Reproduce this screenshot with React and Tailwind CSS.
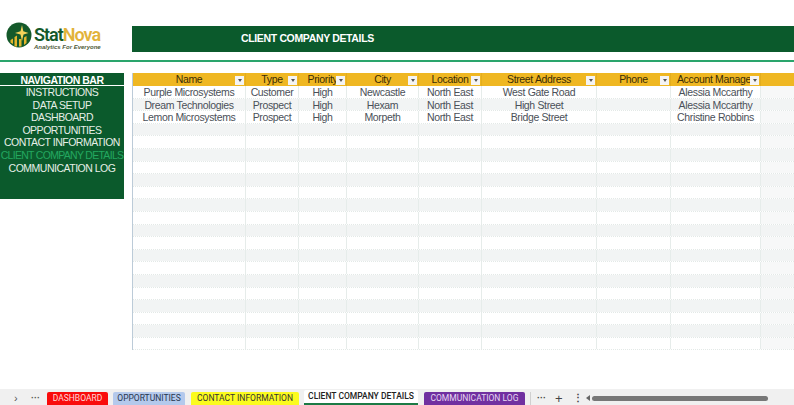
const columns = [
  { name: 'Name', width: 'w-[113px]' },
  { name: 'Type', width: 'w-[53px]' },
  { name: 'Priority', width: 'w-[48px]' },
  { name: 'City', width: 'w-[72px]' },
  { name: 'Location', width: 'w-[63px]' },
  { name: 'Street Address', width: 'w-[115px]' },
  { name: 'Phone', width: 'w-[74px]' },
  { name: 'Account Manager', width: 'w-[90px]' },
]

const clients = [
  ['Purple Microsystems', 'Customer', 'High', 'Newcastle', 'North East', 'West Gate Road', '', 'Alessia Mccarthy'],
  ['Dream Technologies', 'Prospect', 'High', 'Hexam', 'North East', 'High Street', '', 'Alessia Mccarthy'],
  ['Lemon Microsystems', 'Prospect', 'High', 'Morpeth', 'North East', 'Bridge Street', '', 'Christine Robbins'],
]

const rows = Array.from({ length: 21 }, (_, i) => clients[i] || Array(8).fill(''))

const navItems = [
  'INSTRUCTIONS',
  'DATA SETUP',
  'DASHBOARD',
  'OPPORTUNITIES',
  'CONTACT INFORMATION',
  'CLIENT COMPANY DETAILS',
  'COMMUNICATION LOG',
]

const Logo = () => (
  <div className="flex items-start gap-[2px] w-[132px] pl-[6px]">
    <svg width="26" height="26" viewBox="0 0 26 26" className="shrink-0">
      <circle cx="13" cy="13" r="12.500" fill="#14592a" />
      <path d="M16 3l1.300 6.200 5.200 1.800-5 1.500-1.500 6.500-1.500-6.500-5.500-1.500 5.500-1.800z" fill="#f3d25a" />
      <path d="M4.500 18l2.500-1.500V22l-2.500-1.500zM8.500 15l2.500-1.500V24.500H8.500zM13 17h2.500v7.500H13zM18 15.500l2.500-1.500v7l-2.500 2z" fill="#e3b52c" />
    </svg>
    <div className="flex flex-col items-start pt-[3px]">
      <div className="h-[19px] text-[18px] leading-[19px] font-semibold tracking-[-1px] font-['Roboto',sans-serif] text-[#14592a] whitespace-nowrap">
        Stat<span className="text-[#e2b33a]">Nova</span>
      </div>
      <div className="h-[7px] text-[6px] leading-[7px] font-bold italic text-[#4f5b3a] whitespace-nowrap">
        Analytics For Everyone
      </div>
    </div>
  </div>
)

const Tab = ({ label, className }) => (
  <div className={`h-[13px] flex items-center justify-center rounded-t-[2px] text-[8.500px] font-['Roboto',sans-serif] whitespace-nowrap shrink-0 ${className}`}>
    {label}
  </div>
)

const App = () => {
  return (
    <div className="w-[794px] h-[405px] overflow-hidden bg-white flex flex-col font-['Liberation_Sans',sans-serif]">
      <div className="h-[60px] pt-[26px] flex items-start shrink-0">
        <div className="-mt-[4px]"><Logo /></div>
        <div className="h-[26px] flex-1 bg-[#0b5a2c] flex items-center pl-[109px] text-[10.500px] tracking-[-0.35px] font-bold text-white">
          CLIENT COMPANY DETAILS
        </div>
      </div>
      <div className="h-[2px] bg-[#2aa56c] shrink-0" />

      <div className="h-[327px] pt-[11px] flex items-start shrink-0">
        <div className="w-[124px] h-[126px] mr-[8px] bg-[#0b5a2c] text-center text-[10.500px] tracking-[-0.5px] leading-[12.600px] text-[#e6efe8] shrink-0">
          <div className="h-[13px] pt-[1px] font-bold text-white border-b border-white">NAVIGATION BAR</div>
          {navItems.map((item) => (
            <div
              key={item}
              className={`whitespace-nowrap flex justify-center ${item === 'CLIENT COMPANY DETAILS' ? 'text-[#23a860] tracking-[-0.7px]' : ''}`}
            >
              {item}
            </div>
          ))}
        </div>

        <div className="flex-1 border-l border-[#bccbd8]">
          <div className="flex h-[13px] bg-[#efb722]">
            {columns.map((col) => (
              <div key={col.name} className={`${col.width} shrink-0 flex items-center pt-[1px] relative border-r border-[#e3ad1e] text-[10.500px] tracking-[-0.35px] text-[#3a2c05]`}>
                <span className="w-full text-center overflow-hidden whitespace-nowrap">{col.name}</span>
                <div className="absolute right-[1px] top-[3px] w-[9px] h-[9px] bg-[#f4f4f4] flex items-center justify-center">
                  <div className="w-0 h-0 border-x-[2.500px] border-x-transparent border-t-[3px] border-t-[#555]" />
                </div>
              </div>
            ))}
          </div>
          {rows.map((row, i) => (
            <div key={i} className="flex h-[12.600px] border-b border-dotted border-[#e3e9e7]">
              {row.map((cell, j) => (
                <div
                  key={j}
                  className={`${columns[j].width} shrink-0 flex items-center justify-center pt-[2px] border-r border-[#e6ecea] text-[10.500px] tracking-[-0.35px] text-[#4a5058] whitespace-nowrap ${i % 2 === 0 ? 'bg-white' : 'bg-[#f2f4f4]'}`}
                >
                  {cell}
                </div>
              ))}
              <div className={`flex-1 ${i % 2 === 0 ? 'bg-[#f7f8f8]' : 'bg-[#f2f4f4]'}`} />
            </div>
          ))}
        </div>
      </div>

      <div className="flex-1" />
      <div className="h-[16px] bg-[#f0f0f0] flex items-end text-[#333] shrink-0">
        <div className="w-[47px] h-[13px] flex items-center text-[#555] shrink-0">
          <span className="ml-[14px] w-[17px] text-[11px] leading-none">›</span>
          <span className="text-[9px] font-bold leading-none">···</span>
        </div>
        <Tab label="DASHBOARD" className="w-[61px] bg-[#f90c0c] text-[#ffd9d9]" />
        <Tab label="OPPORTUNITIES" className="w-[72px] ml-[5px] bg-[#b4c9ec] text-[#27354d]" />
        <Tab label="CONTACT INFORMATION" className="w-[108px] ml-[6px] bg-[#fbfb1e] text-[#333]" />
        <Tab label="CLIENT COMPANY DETAILS" className="w-[114px] ml-[5px] h-[15px] bg-white font-medium text-[#222] border-b-2 border-[#1c7a45]" />
        <Tab label="COMMUNICATION LOG" className="w-[101px] ml-[6px] bg-[#7030a0] text-[#e6d6f2]" />
        <div className="h-[13px] w-[1px] ml-[5px] bg-[#d0d0d0]" />
        <div className="h-[14px] flex items-center text-[#444] shrink-0">
          <span className="ml-[6px] w-[14px] text-[9px] font-bold leading-none">···</span>
          <span className="ml-[4px] w-[14px] text-[13px] leading-none">+</span>
          <span className="ml-[4px] w-[8px] text-[10px] font-bold leading-none">⋮</span>
        </div>
        <div className="h-[14px] flex items-center ml-[5px] shrink-0">
          <div className="w-0 h-0 border-y-[3px] border-y-transparent border-r-[4px] border-r-[#666]" />
          <div className="ml-[2px] w-[176px] h-[5px] rounded-full bg-[#777]" />
        </div>
      </div>
    </div>
  )
}

export default App
